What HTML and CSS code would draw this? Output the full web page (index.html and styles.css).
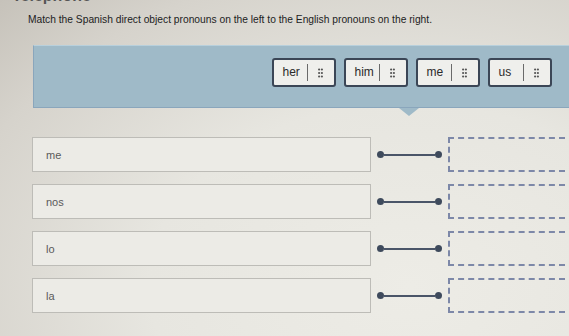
FILE: index.html
```html
<!DOCTYPE html>
<html lang="en">
<head>
  <meta charset="utf-8">
  <title>Telephone</title>
  <link rel="stylesheet" href="styles.css">
</head>
<body>
  <main class="page">
    <h2 class="title">Telephone</h2>
    <p class="prompt">Match the Spanish direct object pronouns on the left to the English pronouns on the right.</p>
    <section class="bank">
      <div class="chip"><span class="word">her</span><span class="grip"><svg width="5" height="10" viewBox="0 0 5 10"><circle cx="1.1" cy="1.5" r="1.1"/><circle cx="3.9" cy="1.5" r="1.1"/><circle cx="1.1" cy="5" r="1.1"/><circle cx="3.9" cy="5" r="1.1"/><circle cx="1.1" cy="8.5" r="1.1"/><circle cx="3.9" cy="8.5" r="1.1"/></svg></span></div>
      <div class="chip"><span class="word">him</span><span class="grip"><svg width="5" height="10" viewBox="0 0 5 10"><circle cx="1.1" cy="1.5" r="1.1"/><circle cx="3.9" cy="1.5" r="1.1"/><circle cx="1.1" cy="5" r="1.1"/><circle cx="3.9" cy="5" r="1.1"/><circle cx="1.1" cy="8.5" r="1.1"/><circle cx="3.9" cy="8.5" r="1.1"/></svg></span></div>
      <div class="chip"><span class="word">me</span><span class="grip"><svg width="5" height="10" viewBox="0 0 5 10"><circle cx="1.1" cy="1.5" r="1.1"/><circle cx="3.9" cy="1.5" r="1.1"/><circle cx="1.1" cy="5" r="1.1"/><circle cx="3.9" cy="5" r="1.1"/><circle cx="1.1" cy="8.5" r="1.1"/><circle cx="3.9" cy="8.5" r="1.1"/></svg></span></div>
      <div class="chip"><span class="word">us</span><span class="grip"><svg width="5" height="10" viewBox="0 0 5 10"><circle cx="1.1" cy="1.5" r="1.1"/><circle cx="3.9" cy="1.5" r="1.1"/><circle cx="1.1" cy="5" r="1.1"/><circle cx="3.9" cy="5" r="1.1"/><circle cx="1.1" cy="8.5" r="1.1"/><circle cx="3.9" cy="8.5" r="1.1"/></svg></span></div>
    </section>
    <section class="pairs">
      <div class="pair">
        <div class="term">me</div>
        <div class="link"><i></i><b></b><i></i></div>
        <div class="slot"></div>
      </div>
      <div class="pair">
        <div class="term">nos</div>
        <div class="link"><i></i><b></b><i></i></div>
        <div class="slot"></div>
      </div>
      <div class="pair">
        <div class="term">lo</div>
        <div class="link"><i></i><b></b><i></i></div>
        <div class="slot"></div>
      </div>
      <div class="pair">
        <div class="term">la</div>
        <div class="link"><i></i><b></b><i></i></div>
        <div class="slot"></div>
      </div>
    </section>
  </main>
</body>
</html>
```

FILE: styles.css
```css
html,body{
  width: 100%;
  height: 100%;
  margin: 0;
  padding: 0;
  overflow: hidden;
  font-family: "Liberation Sans", Arial, sans-serif;
  color: #555;
  background: radial-gradient(ellipse at 72% 85%, #edece6 0%, #e7e6e0 45%, #d6d3cc 80%, #c6c2ba 100%);
}
.page{
  width: 820px;
}
.title{
  margin: -13px 0 0 0;
  padding-left: 12px;
  font-size: 16px;
  color: #555;
}
.prompt{
  margin: 9px 0 0 28px;
  font-size: 10.25px;
  color: #222;
}
.bank{
  position: relative;
  width: 757px;
  height: 63px;
  margin: 20px 0 0 33px;
  box-sizing: border-box;
  padding-top: 12px;
  display: flex;
  justify-content: center;
  align-items: flex-start;
  gap: 8px;
  background: #9fbac8;
  border: 1px solid #8aa6bc;
  border-top-color: #b8d0dc;
}
.bank::after{
  content: "";
  position: absolute;
  left: 365px;
  bottom: -9px;
  width: 0;
  height: 0;
  border-left: 10px solid transparent;
  border-right: 10px solid transparent;
  border-top: 8px solid #9fbac8;
}
.chip{
  display: flex;
  align-items: center;
  width: 64px;
  height: 29px;
  box-sizing: border-box;
  background: #efefec;
  border: 2px solid #3b4656;
  border-radius: 3px;
}
.chip .word{
  flex: 1;
  padding-left: 9px;
  font-size: 12px;
  color: #2a2a2a;
  line-height: 17px;
  border-right: 1px solid #6a6a6a;
}
.chip .grip{
  width: 26px;
  display: flex;
  justify-content: center;
}
.chip .grip svg{
  fill: #555;
}
.pairs{
  margin-top: 29px;
  display: flex;
  flex-direction: column;
  gap: 12px;
}
.pair{
  display: flex;
  align-items: center;
  height: 35px;
  padding-left: 32px;
}
.term{
  width: 339px;
  height: 35px;
  box-sizing: border-box;
  padding: 0 13px;
  display: flex;
  align-items: center;
  font-size: 11px;
  color: #5a5a5a;
  border: 1.5px solid #bdbcb7;
  background: #ecebe6;
}
.link{
  display: flex;
  align-items: center;
  margin: 0 6px;
  width: 65px;
}
.link i{
  width: 7px;
  height: 7px;
  border-radius: 50%;
  background: #3e4a5c;
}
.link b{
  flex: 1;
  height: 2px;
  background: #4a5568;
}
.slot{
  width: 339px;
  height: 35px;
  box-sizing: border-box;
  border: 2px dashed #7d88a8;
}
```
